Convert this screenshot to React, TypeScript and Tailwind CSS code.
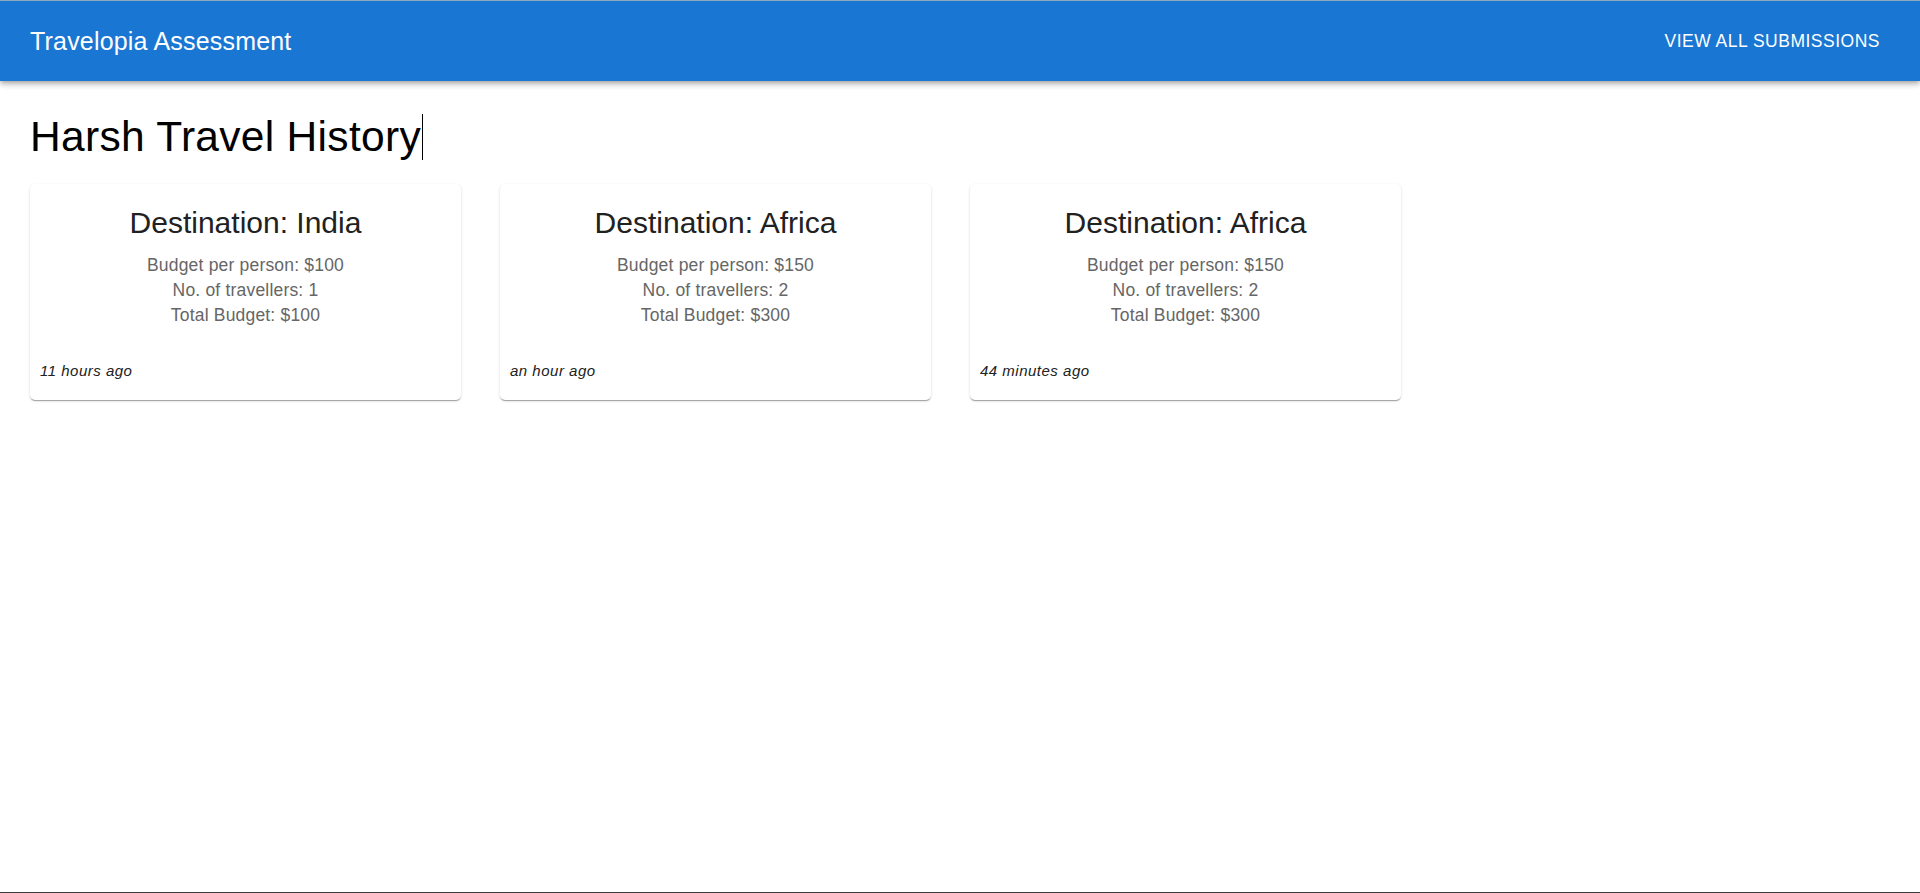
const trips = [
  { destination: "India", budget: 100, travellers: 1, ago: "11 hours ago" },
  { destination: "Africa", budget: 150, travellers: 2, ago: "an hour ago" },
  { destination: "Africa", budget: 150, travellers: 2, ago: "44 minutes ago" },
];

function TripCard({ trip }: { trip: (typeof trips)[number] }) {
  return (
    <div className="w-[431px] h-[216px] rounded-[5px] bg-white flex flex-col shadow-[0px_2px_1px_-1px_rgba(0,0,0,0.2),0px_1px_1px_0px_rgba(0,0,0,0.14),0px_1px_3px_0px_rgba(0,0,0,0.12)]">
      <div className="pt-[19px] px-[20px] text-center">
        <h5 className="text-[30px] leading-[40px] text-[#212121] mb-[10.5px]">
          Destination: {trip.destination}
        </h5>
        <p className="text-[17.5px] leading-[25px] tracking-[0.19px] text-[#666666]">
          Budget per person: ${trip.budget}
        </p>
        <p className="text-[17.5px] leading-[25px] tracking-[0.19px] text-[#666666]">
          No. of travellers: {trip.travellers}
        </p>
        <p className="text-[17.5px] leading-[25px] tracking-[0.19px] text-[#666666]">
          Total Budget: ${trip.budget * trip.travellers}
        </p>
      </div>
      <div className="mt-auto px-[10px] pb-[17px]">
        <span className="text-[15px] leading-[25px] italic tracking-[0.5px] text-[#212121]">
          {trip.ago}
        </span>
      </div>
    </div>
  );
}

export default function App() {
  return (
    <div className="h-[893px] bg-white flex flex-col border-t border-[#8ea8bd] border-b border-b-[#3c3c3c] font-['Liberation_Sans',Arial,sans-serif] overflow-hidden">
      <header className="h-[80px] shrink-0 bg-[#1976d2] px-[30px] flex items-center justify-between text-white relative z-10 shadow-[0px_2px_4px_-1px_rgba(0,0,0,0.2),0px_4px_5px_0px_rgba(0,0,0,0.14),0px_1px_10px_0px_rgba(0,0,0,0.12)]">
        <h6 className="text-[25px] leading-[40px] tracking-[0.19px]">Travelopia Assessment</h6>
        <button className="px-[10px] py-[7px] text-[17.5px] leading-[25px] tracking-[0.5px] uppercase rounded-[5px] hover:bg-white/10">
          View all submissions
        </button>
      </header>

      <main className="flex-1 px-[30px] pt-[30px]">
        <h4 className="flex items-start text-[42.5px] leading-[52.5px] tracking-[0.3px] text-black">
          <span>Harsh Travel History</span>
          <span className="inline-block w-px h-[46px] bg-black mt-[3px] ml-px" />
        </h4>

        <div className="mt-[20px] flex gap-[39px]">
          {trips.map((trip, index) => (
            <TripCard key={index} trip={trip} />
          ))}
        </div>
      </main>
    </div>
  );
}
